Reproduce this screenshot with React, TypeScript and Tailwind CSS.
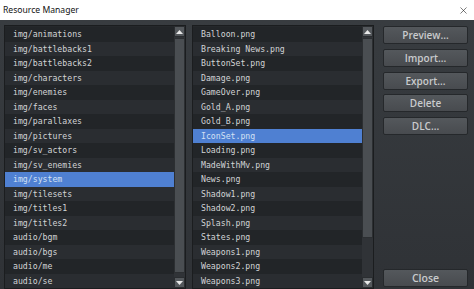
import { X } from "lucide-react";

const folders = [
  "img/animations",
  "img/battlebacks1",
  "img/battlebacks2",
  "img/characters",
  "img/enemies",
  "img/faces",
  "img/parallaxes",
  "img/pictures",
  "img/sv_actors",
  "img/sv_enemies",
  "img/system",
  "img/tilesets",
  "img/titles1",
  "img/titles2",
  "audio/bgm",
  "audio/bgs",
  "audio/me",
  "audio/se",
];

const files = [
  "Balloon.png",
  "Breaking News.png",
  "ButtonSet.png",
  "Damage.png",
  "GameOver.png",
  "Gold_A.png",
  "Gold_B.png",
  "IconSet.png",
  "Loading.png",
  "MadeWithMv.png",
  "News.png",
  "Shadow1.png",
  "Shadow2.png",
  "Splash.png",
  "States.png",
  "Weapons1.png",
  "Weapons2.png",
  "Weapons3.png",
];

const actions = ["Preview...", "Import...", "Export...", "Delete", "DLC..."];

function Arrow({ up }: { up?: boolean }) {
  return (
    <div className="h-[11px] shrink-0 flex items-center justify-center bg-[#54585c] border border-[#2a2d30]">
      <svg width="7" height="4" viewBox="0 0 7 4">
        <path d={up ? "M0 4 L3.5 0 L7 4 Z" : "M0 0 L3.5 4 L7 0 Z"} fill="#e8e8e8" />
      </svg>
    </div>
  );
}

function ResourceList({
  items,
  selected,
  thumbHeight,
}: {
  items: string[];
  selected: string;
  thumbHeight: string;
}) {
  return (
    <div className="w-[182px] h-full flex border border-[#1b1d1f] bg-[#25282b]">
      <div className="flex-1 flex flex-col pt-px overflow-hidden">
        {items.map((item, i) => (
          <div
            key={item}
            className={`h-[14.5px] shrink-0 flex items-center pl-[8px] text-[8.2px] leading-none ${
              item === selected
                ? "bg-[#4f80d2] text-[#d4e0f4]"
                : i % 2 === 0
                ? "bg-[#222528] text-[#d2d4d6]"
                : "bg-[#2a2d31] text-[#d2d4d6]"
            }`}
            style={{ fontFamily: '"DejaVu Sans Mono", monospace' }}
          >
            {item}
          </div>
        ))}
      </div>
      <div className="w-[11px] flex flex-col bg-[#303337]">
        <Arrow up />
        <div className="flex-1 flex flex-col pt-px pb-[4px]">
          <div className={`${thumbHeight} bg-[#4a4e52] border border-[#2c2f32]`} />
        </div>
        <Arrow />
      </div>
    </div>
  );
}

export default function App() {
  return (
    <div className="w-[474px] h-[289px] flex flex-col overflow-hidden bg-[#35393d]">
      <div
        className="h-[20px] shrink-0 flex items-center justify-between bg-white pl-[3px] pr-[5px] text-[8.6px] text-[#111]"
        style={{ fontFamily: '"Noto Sans", sans-serif' }}
      >
        <span>Resource Manager</span>
        <X size={11} strokeWidth={1.3} color="#222" />
      </div>
      <div className="flex-1 flex pt-[5px] pl-[4px] bg-gradient-to-b from-[#383c40] to-[#2f3236]">
        <ResourceList items={folders} selected="img/system" thumbHeight="h-[235px]" />
        <div className="w-[6px]" />
        <ResourceList items={files} selected="IconSet.png" thumbHeight="h-[200px]" />
        <div
          className="w-[85px] ml-[9px] flex flex-col gap-[4.75px] pt-px pb-[2px]"
          style={{ fontFamily: '"Open Sans", sans-serif' }}
        >
          {actions.map((a) => (
            <button
              key={a}
              className="h-[18px] rounded-[2px] border border-[#25282b] bg-gradient-to-b from-[#54585c] to-[#484b4f] text-[10px] font-semibold text-[#c9cbcd] leading-none"
            >
              {a}
            </button>
          ))}
          <button className="mt-auto h-[18px] rounded-[2px] border border-[#25282b] bg-gradient-to-b from-[#54585c] to-[#484b4f] text-[10.5px] font-semibold text-[#c9cbcd] leading-none">
            Close
          </button>
        </div>
      </div>
    </div>
  );
}
